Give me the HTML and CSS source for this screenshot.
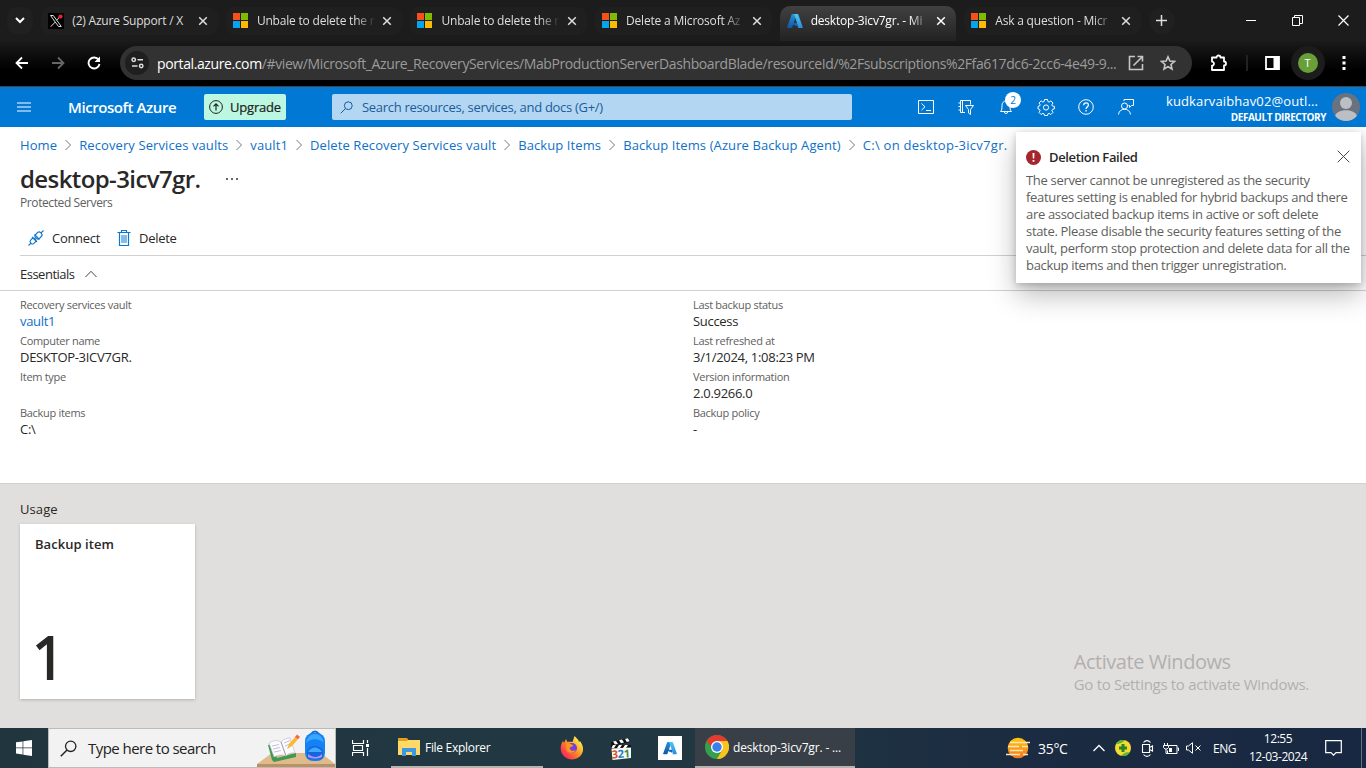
FILE: index.html
```html
<!DOCTYPE html>
<html lang="en">
<head>
    <meta charset="UTF-8">
    <title>desktop-3icv7gr. - Microsoft Azure</title>
    <link rel="stylesheet" href="styles.css">
</head>
<body>
<svg class="defs" width="0" height="0">
    <linearGradient id="azl" x1="0" y1="0" x2="0" y2="1"><stop offset="0" stop-color="#2b8fd8"/><stop offset="1" stop-color="#0c5aa8"/></linearGradient>
    <linearGradient id="azr" x1="0" y1="0" x2="0" y2="1"><stop offset="0" stop-color="#4cc8f4"/><stop offset="1" stop-color="#2a8ce0"/></linearGradient>
    <symbol id="ms" viewBox="0 0 15 15"><path fill="#f8501d" d="M0 0h7v7H0z"/><path fill="#80bb03" d="M8 0h7v7H8z"/><path fill="#03a5f0" d="M0 8h7v7H0z"/><path fill="#ffb903" d="M8 8h7v7H8z"/></symbol>
    <symbol id="azure" viewBox="0 0 16 16"><path fill="url(#azl)" d="M5.4 1h4.4L5.2 14.3a1 1 0 0 1-1 .7H1.1a.8.8 0 0 1-.8-1.1L4.6 1.6a1 1 0 0 1 .8-.6z"/><path fill="#1268b8" d="M5 10h6.500l-1 3.500L5 11z"/><path fill="url(#azr)" d="M6.200 1h4.300a1 1 0 0 1 .9.700l4.300 12.300a.8.800 0 0 1-.8 1H10.500a1 1 0 0 0 .7-1.200L7.200 1.600A1 1 0 0 0 6.200 1z"/></symbol>
    <symbol id="x" viewBox="0 0 10 10"><path d="M1.200 1.200l7.600 7.600M8.800 1.200L1.200 8.800" stroke="currentColor" stroke-width="1.500" fill="none"/></symbol>
    <symbol id="sep" viewBox="0 0 8 14"><path d="M1.500 2l5 5-5 5" stroke="#777" fill="none"/></symbol>
</svg>

<div class="tabs">
    <div class="tab-search"><svg width="10" height="7" viewBox="0 0 10 7"><path d="M1 1l4 4 4-4" fill="none" stroke="#fff" stroke-width="2"/></svg></div>
    <div class="tab">
        <svg width="16" height="16" viewBox="0 0 16 16"><path d="M0 0h16v16H0z" fill="#000"/><path d="M2.500 2.500h2.800l8 11h-2.800zM13 2.500L8.700 7.200M7.300 9l-4.600 4.700" fill="none" stroke="#ddd"/><circle cx="12.500" cy="3.500" r="2.100" fill="#f4212e"/></svg>
        <span class="name">(2) Azure Support / X</span><svg class="close"><use href="#x"/></svg>
    </div>
    <div class="tab"><svg class="ms"><use href="#ms"/></svg><span class="name fade">Unbale to delete the r</span><svg class="close"><use href="#x"/></svg></div>
    <div class="tab"><svg class="ms"><use href="#ms"/></svg><span class="name fade">Unbale to delete the r</span><svg class="close"><use href="#x"/></svg></div>
    <div class="tab"><svg class="ms"><use href="#ms"/></svg><span class="name fade">Delete a Microsoft Az</span><svg class="close"><use href="#x"/></svg></div>
    <div class="tab active"><svg width="16" height="16"><use href="#azure"/></svg><span class="name fade">desktop-3icv7gr. - Mi</span><svg class="close"><use href="#x"/></svg></div>
    <div class="tab"><svg class="ms"><use href="#ms"/></svg><span class="name fade">Ask a question - Micr</span><svg class="close"><use href="#x"/></svg></div>
    <div class="new-tab"><svg width="11" height="11" viewBox="0 0 11 11"><path d="M5.500 0v11M0 5.500h11" stroke="#ddd" stroke-width="1.500"/></svg></div>
    <div class="win-btns">
        <svg width="11" height="11" viewBox="0 0 11 11"><path d="M0 5.500h10" stroke="#fff"/></svg>
        <svg width="11" height="11" viewBox="0 0 11 11"><path d="M.5 2.500h7v8h-7zM2.500 2.500v-2h8v8h-3" fill="none" stroke="#fff"/></svg>
        <svg width="11" height="11" viewBox="0 0 11 11"><path d="M.5.500l10 10M10.500.500l-10 10" stroke="#fff" stroke-width="1.200"/></svg>
    </div>
</div>

<div class="toolbar">
    <div class="nav">
        <svg width="14" height="14" viewBox="0 0 14 14"><path d="M13 7H2M7 1.500L1.500 7 7 12.500" fill="none" stroke="#fff" stroke-width="1.800"/></svg>
        <svg width="14" height="14" viewBox="0 0 14 14"><path d="M1 7h11M7 1.500L12.500 7 7 12.500" fill="none" stroke="#666" stroke-width="1.800"/></svg>
        <svg width="14" height="14" viewBox="0 0 14 14"><path d="M11.600 3.800A5.500 5.500 0 1 0 12.500 8" fill="none" stroke="#fff" stroke-width="1.900"/><path d="M13 .500v5.500H7.500z" fill="#fff"/></svg>
    </div>
    <div class="url">
        <div class="site"><svg width="13" height="12" viewBox="0 0 13 12"><g fill="none" stroke="#ddd" stroke-width="1.500"><circle cx="2.700" cy="2.700" r="1.700"/><path d="M6.500 2.700h5.500M1 9h5.500"/><circle cx="10.200" cy="9" r="1.700"/></g></svg></div>
        <span class="addr"><b>portal.azure.com</b>/#view/Microsoft_Azure_RecoveryServices/MabProductionServerDashboardBlade/resourceId/%2Fsubscriptions%2Ffa617dc6-2cc6-4e49-9...</span>
        <svg width="16" height="16" viewBox="0 0 16 16"><path d="M7 1.500H1.500v13h13V9M9.500 1.500h5v5M14.500 1.500L5.500 10.500" fill="none" stroke="#c6c6c6" stroke-width="1.600"/></svg>
        <svg width="16" height="16" viewBox="0 0 16 16"><path d="M8 1.800l1.900 4.200 4.600.400-3.500 3.100 1 4.500L8 11.600 4 14l1-4.500L1.500 6.400 6.100 6z" fill="none" stroke="#c6c6c6" stroke-width="1.600"/></svg>
    </div>
    <div class="exts">
        <svg width="18" height="18" viewBox="0 0 18 18"><path d="M2 3.500h4.500a2 2 0 0 1 4 0H14v4a2 2 0 0 1 0 4V16H2v-4.300a2 2 0 0 0 0-4z" fill="none" stroke="#fff" stroke-width="1.800" stroke-linejoin="round"/></svg>
        <i class="bar"></i>
        <svg width="16" height="14" viewBox="0 0 16 14"><path d="M1 1h13v12H1z" fill="none" stroke="#fff" stroke-width="1.800"/><path d="M8.500 1H14v12H8.500z" fill="#fff"/></svg>
        <div class="profile"><span>T</span></div>
        <svg width="4" height="14" viewBox="0 0 4 14"><path d="M.5 0h3v3h-3zM.5 5.500h3v3h-3zM.5 11h3v3h-3z" fill="#fff"/></svg>
    </div>
</div>

<div class="azure-bar">
    <div class="burger"><i></i><i></i><i></i></div>
    <div class="brand">Microsoft Azure</div>
    <div class="upgrade">
        <svg width="14" height="14" viewBox="0 0 14 14"><circle cx="7" cy="7" r="6.400" fill="none" stroke="#222"/><path d="M7 10.500V4M4.500 6.300L7 3.800l2.500 2.500" fill="none" stroke="#222" stroke-width="1.200"/></svg>
        <span>Upgrade</span>
    </div>
    <div class="search">
        <svg width="13" height="13" viewBox="0 0 13 13"><circle cx="8.300" cy="4.700" r="3.900" fill="none" stroke="#1b5b9c"/><path d="M5.500 7.500L.7 12.300" stroke="#1b5b9c"/></svg>
        <span>Search resources, services, and docs (G+/)</span>
    </div>
    <div class="top-icons">
        <svg width="18" height="18" viewBox="0 0 18 18"><path d="M1.500 2.500h15v13h-15zM4.500 5.500L8 8.800l-3.500 3.300M9 12.500h5"/></svg>
        <svg width="18" height="18" viewBox="0 0 18 18"><path d="M8 14.500H3.500v-12h10v4M5.500 2.500v12M1.500 5h2M1.500 8.500h2M1.500 12h2M8.500 7.500h8l-3 4v5l-2-1.500v-3.500z"/></svg>
        <div class="bell"><svg width="18" height="18" viewBox="0 0 18 18"><path d="M3.500 13.500c1.500-1.500 1.500-3 1.500-6 0-2.500 1.500-4.500 4-4.500s4 2 4 4.500c0 3 0 4.500 1.500 6zM7.300 13.800a1.700 1.700 0 0 0 3.400 0"/></svg><span>2</span></div>
        <svg width="18" height="18" viewBox="0 0 18 18"><path d="M7.500 1.500h3l.4 2 1.300.500 1.700-1.100 2.100 2.100-1.100 1.700.5 1.300 2 .4v2.500l-2 .5-.5 1.300 1.100 1.700-2.100 2.100-1.700-1.100-1.300.500-.4 1.600h-3l-.4-1.600-1.300-.5-1.700 1.100L2 14.400l1.100-1.700-.5-1.300-1.600-.5V8.400L2.600 8l.5-1.300L2 5l2.100-2.100L5.800 4l1.300-.5z"/><circle cx="9" cy="9.500" r="2.600"/></svg>
        <svg width="18" height="18" viewBox="0 0 18 18"><circle cx="9" cy="9" r="7.300"/><path d="M6.700 7.200c0-3.200 4.700-3 4.700-.3 0 2-2.400 2.100-2.400 4M9 12v1.500" stroke-width="1.300"/></svg>
        <svg width="18" height="18" viewBox="0 0 18 18"><path d="M7 3V1.500h9.500v6h-2L12.500 9.500v-2h-1"/><circle cx="7.500" cy="8" r="3"/><path d="M1.500 16.500c.5-7 11.500-7 12 0"/></svg>
    </div>
    <div class="account"><div class="mail">kudkarvaibhav02@outl...</div><div class="dir">DEFAULT DIRECTORY</div></div>
    <svg class="avatar" width="28" height="28" viewBox="0 0 28 28"><clipPath id="av"><circle cx="14" cy="14" r="14"/></clipPath><g clip-path="url(#av)"><path d="M0 0h28v28H0z" fill="#68737f"/><circle cx="14" cy="10" r="6" fill="#bcc0c4"/><path d="M3 24c0-9 22-9 22 0l-4 5H7z" fill="#bcc0c4"/></g></svg>
</div>

<div class="blade">
    <div class="crumbs">
        <a>Home</a><svg><use href="#sep"/></svg>
        <a>Recovery Services vaults</a><svg><use href="#sep"/></svg>
        <a>vault1</a><svg><use href="#sep"/></svg>
        <a>Delete Recovery Services vault</a><svg><use href="#sep"/></svg>
        <a>Backup Items</a><svg><use href="#sep"/></svg>
        <a>Backup Items (Azure Backup Agent)</a><svg><use href="#sep"/></svg>
        <a class="last">C:\ on desktop-3icv7gr.</a>
    </div>
    <div class="heading"><h1>desktop-3icv7gr.</h1><span class="dots"><i></i><i></i><i></i></span></div>
    <div class="kind">Protected Servers</div>
    <div class="commands">
        <svg width="16" height="16" viewBox="0 0 16 16"><g fill="none" stroke="#0f76cc" stroke-width="1.100"><path d="M.5 15.500l2.700-2.700M15.500.500l-2.700 2.700"/><rect x="-3" y="-2.300" width="6" height="4.600" rx="2" transform="translate(5 11) rotate(-45)"/><rect x="-3.500" y="-2.700" width="7" height="5.400" rx="2.200" transform="translate(10.500 5.500) rotate(-45)"/><path d="M4 7l5 5M6.500 4.500l5 5"/></g></svg>
        <span>Connect</span>
        <svg width="14" height="16" viewBox="0 0 14 16"><path d="M4.500 2V.500h5V2M.5 2.500h13M2.500 2.500v13h9v-13" fill="none" stroke="#0f76cc" stroke-width="1.200"/><path d="M4 5h6v8H4z" fill="#83bdec"/></svg>
        <span>Delete</span>
    </div>
    <div class="essentials"><span>Essentials</span><svg width="12" height="8" viewBox="0 0 12 8"><path d="M.5 7L6 1.300 11.500 7" fill="none" stroke="#444"/></svg></div>
    <div class="props">
        <dl>
            <dt>Recovery services vault</dt><dd><a>vault1</a></dd>
            <dt>Computer name</dt><dd>DESKTOP-3ICV7GR.</dd>
            <dt>Item type</dt><dd></dd>
            <dt>Backup items</dt><dd>C:\</dd>
        </dl>
        <dl>
            <dt>Last backup status</dt><dd>Success</dd>
            <dt>Last refreshed at</dt><dd>3/1/2024, 1:08:23 PM</dd>
            <dt>Version information</dt><dd>2.0.9266.0</dd>
            <dt>Backup policy</dt><dd>-</dd>
        </dl>
    </div>
</div>

<div class="usage">
    <div>
        <h2>Usage</h2>
        <div class="card"><div class="label">Backup item</div><div class="num">1</div></div>
    </div>
    <div class="activate"><p>Activate Windows</p><small>Go to Settings to activate Windows.</small></div>
</div>

<div class="toast">
    <div class="toast-head">
        <svg width="15" height="15" viewBox="0 0 15 15"><circle cx="7.500" cy="7.500" r="7.500" fill="#a4262c"/><path d="M6.500 3h2l-.3 5.500H6.800zM6.600 10h1.800v1.800H6.600z" fill="#fff"/></svg>
        <b>Deletion Failed</b>
        <svg class="toast-x" width="13" height="13" viewBox="0 0 13 13"><path d="M.7.700l11.600 11.600M12.300.700L.7 12.300" stroke="#444"/></svg>
    </div>
    <p>The server cannot be unregistered as the security<br>features setting is enabled for hybrid backups and there<br>are associated backup items in active or soft delete<br>state. Please disable the security features setting of the<br>vault, perform stop protection and delete data for all the<br>backup items and then trigger unregistration.</p>
</div>

<div class="taskbar">
    <div class="start"><svg width="16" height="16" viewBox="0 0 16 16"><path d="M0 2.300l6.600-.9v6.200H0zM7.300 1.300L16 0v7.600H7.300zM0 8.300h6.600v6.200L0 13.600zM7.300 8.300H16V16l-8.700-1.300z" fill="#fff"/></svg></div>
    <div class="find">
        <svg width="17" height="17" viewBox="0 0 17 17"><circle cx="10.700" cy="6.300" r="5.200" fill="none" stroke="#222" stroke-width="1.300"/><path d="M7 10L.8 16.200" stroke="#222" stroke-width="1.500"/></svg>
        <span>Type here to search</span>
        <svg class="art" width="78" height="38" viewBox="0 0 78 38">
            <path d="M0 35l15-11h49l14 11z" fill="#dfba8d"/><path d="M0 35h78v3H0z" fill="#bd9063"/>
            <path d="M11 16l4-1 5 14 19-5v4l-22 5-2-2z" fill="#3f9950"/><path d="M12 14c5-3 8-3 12-1 2-3 6-4 9-4l5 15c-4-.5-7 .500-9 3-4-2-8-1-12 1z" fill="#fafaff" stroke="#b9b7cc" stroke-width=".6"/><path d="M24 13l5 14" stroke="#9a96b0"/><path d="M15 17l7-1.500M16 20l7-1.500M17 23l7-1.500M27 14l6-2.500M28 17l6-2.500" stroke="#aaa9b8" stroke-width=".7"/>
            <path d="M30 20l2-5 7-8 3 2-7 8z" fill="#ffb52e"/><path d="M38 8l2-2.500 3 2.500-2 2z" fill="#f5664b"/>
            <path d="M54 8V5q4-5 8 0v3" fill="none" stroke="#1769cf" stroke-width="2"/><rect x="48" y="4" width="20" height="28" rx="8" fill="#1581f4"/><path d="M49 14c2-12 16-12 18 0-5-5-13-5-18 0z" fill="#38a7ff"/><path d="M50 29v-6c1-8 15-8 16 0v6c-5 2-11 2-16 0z" fill="#1267dc"/><path d="M51 23c3-6 11-6 14 0" fill="#3da9ff"/><path d="M51 25c5 4 10 4 14 0v3c-5 2-9 2-14 0z" fill="#bb91ff"/>
        </svg>
    </div>
    <div class="icon view"><svg width="17" height="16" viewBox="0 0 17 16"><path d="M.5 0v3.500h11V0M1.500 5.500h9v5h-9zM.5 16v-3.500h11V16M15.500 0v3M15.500 8v8" fill="none" stroke="#fff" stroke-width="1.200"/><path d="M14 4h3v3h-3z" fill="#fff"/></svg></div>
    <div class="task explorer">
        <svg width="22" height="20" viewBox="0 0 22 20"><path d="M0 1h9l1.500 2H22v5H0z" fill="#e2a117"/><path d="M0 4h9l1-1h12v15H0z" fill="#ffd86a"/><path d="M4 11h14v8h-4v-4H8v4H4z" fill="#3c99df"/></svg>
        <span>File Explorer</span>
    </div>
    <div class="icon fox"><svg width="24" height="24" viewBox="0 0 24 24">
        <defs><linearGradient id="fx" x1="1" y1="0" x2="0" y2="1"><stop offset=".15" stop-color="#fff04a"/><stop offset=".5" stop-color="#ff8b23"/><stop offset=".8" stop-color="#ff3550"/><stop offset="1" stop-color="#e8248d"/></linearGradient></defs>
        <path d="M3 5l1 2 2-4 1.500 3c2-.5 3-.5 5 0L14.500 0c1.500 2 4 3 4.500 6l1-1c2 3 3.500 6 3 9.500C22 20 17.500 23.500 12 23.500S1 19 .7 13C.6 9.500 1.500 7 3 5z" fill="url(#fx)"/><circle cx="12" cy="12" r="5" fill="#763fdb"/><path d="M6 8c3-1 5 0 7.500 1.500-1 1.500-3 1-4 2.500 1 3 4 3.500 6.500 2-2 4-8 3.500-9.500 0z" fill="#ff9420"/></svg></div>
    <div class="icon clap"><svg width="22" height="23" viewBox="0 0 22 23"><path d="M1 5l18-4 .8 4L1.800 9z" fill="#111"/><path d="M3 4.600l3-.7 2 3-3 .7zM9 3.200l3-.7 2 3-3 .7zM15 1.900l3-.7 1.500 3-2.700.7z" fill="#fff"/><path d="M1 8h20v4H1z" fill="#111"/><path d="M3 8h3l-2 3H1.500zM9 8h3l-2 3H7zM15 8h3l-2 3h-3z" fill="#fff"/><path d="M1.500 11.500l19.500-1v10.500L2.500 23z" fill="#fafafa"/><text x="2" y="21.500" transform="rotate(-4 2 20)"><tspan fill="#d25219">3</tspan><tspan fill="#237bc0">2</tspan><tspan fill="#36953d">1</tspan></text></svg></div>
    <div class="icon az"><svg width="24" height="24" viewBox="-4 -4 24 24"><path d="M-4-4h24v24H-4z" fill="#fff"/><use href="#azure" x="1" y="1" width="14" height="14"/></svg></div>
    <div class="task chrome">
        <svg width="24" height="24" viewBox="0 0 24 24"><circle cx="12" cy="12" r="12" fill="#34a04d"/><path d="M1.600 6A12 12 0 0 1 22.400 6H12L8 14z" fill="#e33b2e"/><path d="M22.400 6A12 12 0 0 1 12 24l5.200-9L12 6z" fill="#fcc31e"/><circle cx="12" cy="12" r="6" fill="#fff"/><circle cx="12" cy="12" r="4.700" fill="#397fee"/></svg>
        <span>desktop-3icv7gr. - ...</span>
    </div>
    <div class="tray">
        <svg width="24" height="22" viewBox="0 0 24 22"><defs><linearGradient id="sun" x1="0" y1="0" x2="0" y2="1"><stop offset="0" stop-color="#ffc90c"/><stop offset="1" stop-color="#f57522"/></linearGradient></defs><circle cx="12" cy="11" r="10.300" fill="url(#sun)"/><path d="M4 5.500h20M2 9.500h11M16 9.500h6M4 13.500h13M0 17.500h14M17 17.500h5" stroke="#ffe6bd" stroke-width="1.700"/></svg>
        <span class="temp">35°C</span>
        <svg class="up" width="12" height="8" viewBox="0 0 12 8"><path d="M.5 7L6 1.500 11.500 7" fill="none" stroke="#fff" stroke-width="1.300"/></svg>
        <svg class="plus" width="16" height="16" viewBox="0 0 16 16"><circle cx="8" cy="8" r="8" fill="#f7d92f"/><path d="M1 4a8 8 0 0 1 9-3.700C7 3 5 4 1 4zM15 12a8 8 0 0 1-9 3.700c3-2.700 5-3.700 9-3.700z" fill="#52b73b"/><path d="M6.500 4h3v2.500H12v3H9.500V12h-3V9.500H4v-3h2.500z" fill="#24852b"/></svg>
        <svg class="meet" width="13" height="17" viewBox="0 0 13 17"><path d="M2.500 2.500c2-2.500 5-2.500 7 0M2.500 14.500c2 2.500 5 2.500 7 0M1.500 4.500h7v8h-7zM8.500 7.500l3-1.500v5l-3-1.500" fill="none" stroke="#fff" stroke-width="1.100"/></svg>
        <svg class="batt" width="16" height="13" viewBox="0 0 16 13"><path d="M5.500 3.500h8.500v8H4.500v-3M14.500 6h1v3M1.500 1v2M4.500 1v2M.5 3.500h5v2l-1.500 1.500h-2L.5 5.500zM3 7v4.500h2" fill="none" stroke="#fff"/><path d="M6 6h3v4H6z" fill="#fff"/></svg>
        <svg class="vol" width="15" height="12" viewBox="0 0 15 12"><path d="M.5 4h2L6.500.700v10.600L2.500 8h-2zM9.500 3.500l5 5M14.500 3.500l-5 5" fill="none" stroke="#fff"/></svg>
        <span class="lang">ENG</span>
        <div class="clock"><div class="time">12:55</div><div>12-03-2024</div></div>
        <svg class="note" width="17" height="16" viewBox="0 0 17 16"><path d="M.7.700h15.600v12H11l-2.500 2.500L6 12.700H.7z" fill="none" stroke="#fff" stroke-width="1.200"/></svg>
    </div>
</div>
</body>
</html>
```
FILE: styles.css
```css
*{ padding: 0; margin: 0; box-sizing: border-box}
body{ width: 1366px; height: 768px; overflow: hidden; background: #fff; color: #292827;
    font-family: "Open Sans", "Noto Sans", sans-serif; font-size: 13px; letter-spacing: -0.3px; white-space: nowrap}
svg{ display: block; flex: none}
.defs{ position: absolute}
i{ display: block}

/* browser tabs */
.tabs{ height: 41px; display: flex; align-items: center; padding-left: 7px; background: #1c1c1c; color: #dedede}
.tab-search{ width: 26px; height: 27px; margin-right: 8.300px; border-radius: 9px; background: #202020;
    display: flex; align-items: center; justify-content: center}
.tab{ width: 176.600px; height: 28px; margin-right: 8px; padding: 0 10px 0 7px; border-radius: 9px;
    background: #1f1f1f; display: flex; align-items: center; font-size: 12px; letter-spacing: -0.2px}
.tab .ms{ width: 15px; height: 15px; margin-right: 1px}
.tab .name{ width: 120px; margin-left: 8px}
.tab .fade{ -webkit-mask-image: linear-gradient(90deg, #000 82%, transparent 99%)}
.tab .close{ width: 10px; height: 10px; margin-left: auto}
.tab.active{ height: 35px; margin-top: 6px; padding-bottom: 6px; border-radius: 10px 10px 0 0;
    background: linear-gradient(#414141, #222); color: #fff}
.new-tab{ width: 26px; height: 26px; border-radius: 50%; background: #202020; display: flex; align-items: center; justify-content: center}
.win-btns{ margin-left: auto; padding-right: 17px; display: flex; gap: 35px}

/* address bar */
.toolbar{ height: 46px; padding-bottom: 1px; background: linear-gradient(#1a1a1a, #000 65%); border-bottom: 1px solid #444;
    display: flex; align-items: center}
.nav{ width: 120px; padding-left: 15px; display: flex; gap: 22px}
.url{ width: 1072px; height: 34px; padding: 0 16px 0 5px; border-radius: 17px; background: #323232;
    display: flex; align-items: center; gap: 16px}
.site{ flex: none; width: 24px; height: 24px; border-radius: 50%; background: #1f1f1f; display: flex; align-items: center; justify-content: center}
.addr{ flex: none; width: 963px; margin: 0 -8px; font-size: 14px; letter-spacing: -0.390px; color: #9b9b9b}
.addr b{ color: #fff; font-weight: 400}
.exts{ flex: 1; padding: 0 20px 0 18px; display: flex; align-items: center; justify-content: space-between}
.bar{ width: 2px; height: 16px; background: #222}
.profile{ width: 34px; height: 34px; margin: 0 0 0 -8px; border-radius: 50%; background: #1c1c1c; display: flex; align-items: center; justify-content: center}
.profile span{ width: 20px; height: 20px; border-radius: 50%; background: #689f38; color: #fff; font-size: 11px; line-height: 20px; text-align: center}

/* portal header */
.azure-bar{ height: 40px; background: #0078d4; color: #fff; display: flex; align-items: center}
.burger{ width: 68px; padding-left: 17px}
.burger i{ width: 14px; height: 2px; margin: 2px 0; background: #80bbe9}
.brand{ width: 136px; font-size: 15px; font-weight: 600; letter-spacing: -0.420px}
.upgrade{ width: 82px; height: 26px; padding-left: 5px; border-radius: 2px; background: #bbf7e1; color: #222;
    display: flex; align-items: center; gap: 7px; font-weight: 500; letter-spacing: -0.2px; -webkit-text-stroke: 0.2px #222}
.search{ width: 520px; height: 26px; margin-left: 46px; padding-left: 8px; border-radius: 2px; background: #b3d7f2;
    color: #1b5b9c; display: flex; align-items: center; gap: 9px}
.top-icons{ margin-left: 65px; display: flex; gap: 22px}
.top-icons svg{ fill: none; stroke: #fff; stroke-width: 1}
.bell{ position: relative}
.bell span{ position: absolute; left: 8px; top: -6px; width: 16px; height: 16px; border-radius: 50%; background: #fff;
    color: #0078d4; font-size: 10px; line-height: 16px; text-align: center}
.account{ width: 191px; padding-top: 3px; text-align: right}
.mail{ padding-right: 8px; line-height: 16px; letter-spacing: 0.120px}
.dir{ font-size: 10px; font-weight: 700; line-height: 16px; letter-spacing: -0.450px}
.avatar{ margin-left: 6px}

/* blade */
.blade{ height: 357px; border-bottom: 1px solid #d2d0ce}
.crumbs{ height: 36px; padding-left: 20px; display: flex; align-items: center; color: #0f70c8; letter-spacing: 0.100px}
.crumbs svg{ width: 8px; height: 14px; margin: 0 7px}
.crumbs .last{ letter-spacing: 0.270px}
.heading{ height: 31px; padding-left: 20px; display: flex; align-items: center}
.heading h1{ width: 206px; font-size: 24px; font-weight: 600; line-height: 31px; letter-spacing: -0.6px}
.dots{ display: flex; gap: 3px}
.dots i{ width: 2px; height: 2px; background: #666}
.kind{ padding-left: 20px; font-size: 12px; line-height: 18px; letter-spacing: -0.4px; color: #605e5c}
.commands{ height: 44px; margin-left: 20px; padding: 9px 0 0 8px; border-bottom: 1px solid #d2d0ce; display: flex; align-items: center}
.commands span{ margin: 0 17px 0 8px}
.essentials{ height: 35px; padding: 2px 0 0 20px; border-bottom: 1px solid #d2d0ce; display: flex; align-items: center; gap: 10px; letter-spacing: -0.5px}
.props{ padding: 5px 0 0 20px; display: grid; grid-template-columns: 673px 1fr}
.props dt{ font-size: 11px; line-height: 17px; color: #605e5c}
.props dd{ height: 19px; line-height: 16px}
.props a{ color: #0f70c8}

.usage{ height: 244px; padding: 16px 57px 0 20px; background: #e1dfdd; display: flex; justify-content: space-between}
.usage h2{ height: 24px; font-size: 13px; font-weight: 400; line-height: 18px; letter-spacing: 0.1px}
.card{ width: 175px; height: 175px; padding: 11px 15px; background: #fff; box-shadow: 0 1px 3px #0003;
    display: flex; flex-direction: column; justify-content: space-between}
.card .label{ font-weight: 600; line-height: 18px; letter-spacing: 0.050px}
.card .num{ margin-left: -3px; font-size: 58px; line-height: 62px; -webkit-text-stroke: 1.8px #292827}
.activate{ padding-top: 149px; color: #b1b0af}
.activate p{ font-size: 20px; line-height: 26px; letter-spacing: -0.450px}
.activate small{ display: block; font-size: 15px; line-height: 19px}

/* error toast */
.toast{ position: absolute; left: 1016px; top: 132px; width: 345px; height: 151px; padding: 16px 10px; background: #fff;
    box-shadow: 0 12px 26px #0004, 0 2px 7px #0003}
.toast-head{ height: 18px; display: flex; align-items: center; gap: 8px}
.toast b{ font-weight: 600; letter-spacing: -0.350px}
.toast-x{ margin: -2px 1px 0 auto}
.toast p{ margin-top: 6px; line-height: 17px; letter-spacing: -0.320px; color: #605e5c}

/* windows taskbar */
.taskbar{ height: 40px; background: linear-gradient(90deg, #21353f, #213842 50%, #1b2b41 75%, #192842); color: #fff; display: flex}
.start{ width: 48px; display: flex; align-items: center; justify-content: center}
.find{ width: 288px; padding-left: 11px; background: #f2f2f2; border: 1px solid #bbb; color: #222;
    display: flex; align-items: center; font-size: 15px; letter-spacing: -0.550px}
.find span{ margin-left: 11px}
.find .art{ margin-left: auto}
.icon{ display: flex; align-items: center; justify-content: center}
.view{ width: 48px}
.task{ display: flex; align-items: center; border-bottom: 2px solid #b5b2b0; font-size: 12px}
.explorer{ width: 152px; margin-left: 7px; padding-left: 7px; gap: 5px}
.fox{ width: 24px; margin-left: 17px}
.clap{ width: 22px; margin-left: 26px}
.clap text{ font-size: 11px; font-weight: 700}
.az{ width: 24px; margin-left: 26px}
.chrome{ width: 160px; margin-left: 13px; padding-left: 10px; gap: 4px; background: #393f47; letter-spacing: -0.150px}
.tray{ flex: 1; padding-left: 151px; display: flex; align-items: center; border-right: 1px solid #68717e; margin-right: 4px}
.temp{ width: 49px; margin-left: 8px; font-size: 14px}
.up{ margin-left: 6px}
.plus{ margin-left: 10px}
.meet{ margin-left: 10px}
.batt{ margin-left: 9px}
.vol{ margin-left: 7px}
.lang{ width: 25px; margin-left: 12px; font-size: 12px; letter-spacing: -0.5px}
.clock{ width: 60px; margin-left: 10px; font-size: 12px; line-height: 18px; letter-spacing: -0.450px; text-align: center}
.note{ margin-left: 17px}
```
